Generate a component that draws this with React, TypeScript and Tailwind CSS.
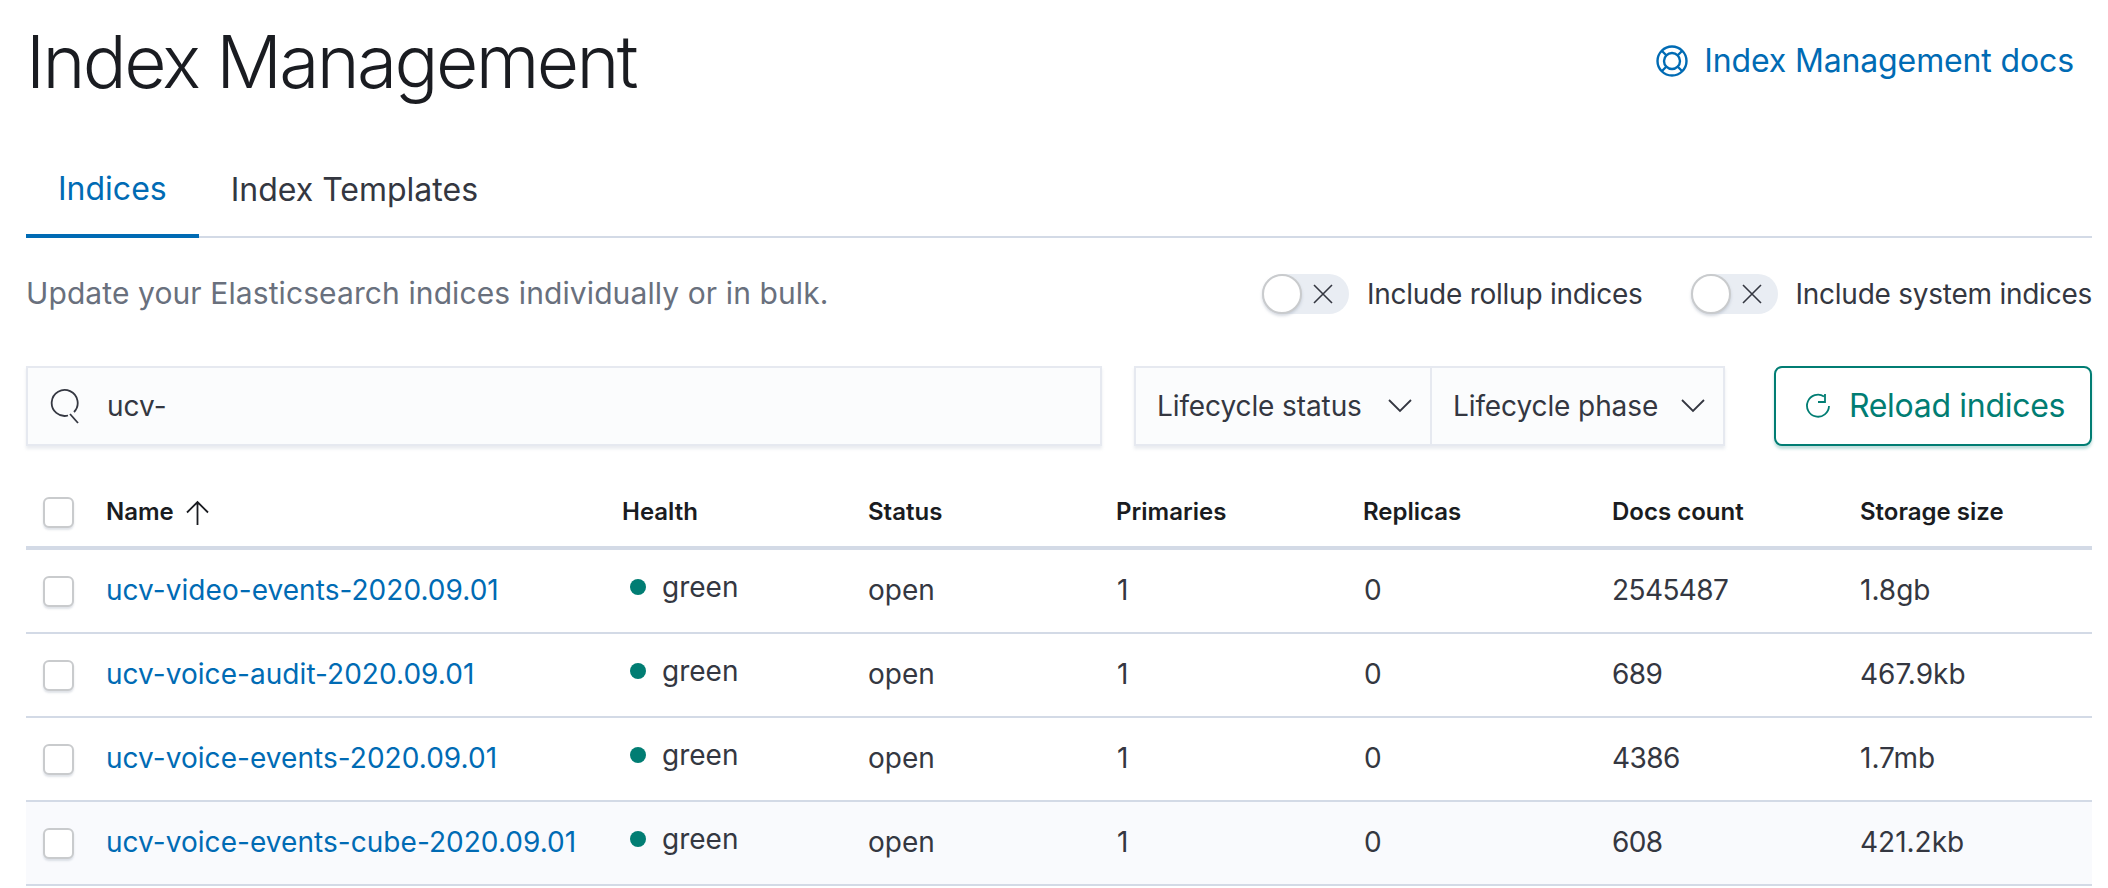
import React from 'react';

const rows = [
  { name: 'ucv-video-events-2020.09.01', docs: '2545487', size: '1.8gb' },
  { name: 'ucv-voice-audit-2020.09.01', docs: '689', size: '467.9kb' },
  { name: 'ucv-voice-events-2020.09.01', docs: '4386', size: '1.7mb' },
  { name: 'ucv-voice-events-cube-2020.09.01', docs: '608', size: '421.2kb', shaded: true },
];

const columns = 'grid grid-cols-[80px_516px_246px_248px_247px_249px_248px_232px] items-center';

const Checkbox = () => (
  <div className="ml-[17px] h-[31px] w-[31px] rounded-[6px] border-2 border-[#c9cbcd] bg-white shadow-[0_2px_2px_rgba(152,162,179,0.3)]" />
);

const Toggle = ({ label }: { label: string }) => (
  <div className="flex items-center gap-[18px]">
    <div className="relative flex h-[40px] w-[87px] items-center justify-end rounded-full bg-[#e9edf3] pr-[15px]">
      <div className="absolute left-0 top-0 h-[40px] w-[40px] rounded-full border-2 border-[#c9cbcd] bg-white shadow-[0_2px_3px_rgba(152,162,179,0.4)]" />
      <svg width="22" height="22" viewBox="0 0 22 22" fill="none" stroke="#343741" strokeWidth="1.6">
        <path d="M2 2l18 18M20 2L2 20" />
      </svg>
    </div>
    <span className="text-[28px] leading-none tracking-[-0.25px] text-[#343741]">{label}</span>
  </div>
);

const Chevron = () => (
  <svg width="24" height="14" viewBox="0 0 24 14" fill="none" stroke="#343741" strokeWidth="1.8">
    <path d="M1 1l11 11L23 1" />
  </svg>
);

const filterBox = 'flex items-center bg-[#fbfcfd] border-2 border-[#e6e9f0] shadow-[0_3px_3px_rgba(152,162,179,0.2)] h-[80px]';

export default function App() {
  return (
    <div className="h-[888px] w-[2108px] overflow-hidden bg-white pl-[26px] pr-[16px] font-['Inter',sans-serif] text-[#343741]">
      <div className="flex h-[122px] items-center justify-between">
        <h1 className="text-[73px] font-light leading-none tracking-[-0.036em] text-[#1a1c21]">Index Management</h1>
        <a className="mr-[18px] flex items-center gap-[16px] text-[32px] leading-none tracking-[-0.13px] text-[#006bb4]">
          <svg width="32" height="32" viewBox="0 0 32 32" fill="none" stroke="#006bb4" strokeWidth="2.4">
            <circle cx="16" cy="16" r="14.5" />
            <circle cx="16" cy="16" r="8" />
            <path d="M6 6l4.5 4.5M26 6l-4.5 4.5M6 26l4.5-4.5M26 26l-4.5-4.5" />
          </svg>
          Index Management docs
        </a>
      </div>

      <div className="flex h-[116px] items-end border-b-2 border-[#d3dae6]">
        <div className="-mb-[2px] flex h-[98px] items-center border-b-4 border-[#006bb4] px-[32px] pt-[4px] text-[32px] leading-none text-[#006bb4]">Indices</div>
        <div className="flex h-[96px] items-center px-[32px] pt-[4px] text-[32px] leading-none text-[#343741]">Index Templates</div>
      </div>

      <div className="mt-[36px] flex h-[40px] items-center">
        <p className="flex-1 pb-[2px] text-[30px] leading-none tracking-[0.1px] text-[#69707d]">Update your Elasticsearch indices individually or in bulk.</p>
        <div className="flex gap-[48px]">
          <Toggle label="Include rollup indices" />
          <Toggle label="Include system indices" />
        </div>
      </div>

      <div className="mt-[52px] flex items-center">
        <div className={`${filterBox} w-[1076px] pl-[20px]`}>
          <svg width="36" height="36" viewBox="0 0 36 36" fill="none" stroke="#343741" strokeWidth="1.8">
            <path d="M20 27.5A13 13 0 1 1 26 24" />
            <path d="M22 26l8 9" />
          </svg>
          <span className="ml-[23px] text-[28px] leading-none">ucv-</span>
        </div>
        <div className={`${filterBox} ml-[32px] w-[591px] text-[28px] leading-none tracking-[-0.1px]`}>
          <div className="flex h-full w-[296px] items-center justify-between border-r-2 border-[#e6e9f0] pl-[21px] pr-[18px]">
            Lifecycle status
            <Chevron />
          </div>
          <div className="flex h-full flex-1 items-center justify-between pl-[21px] pr-[18px]">
            Lifecycle phase
            <Chevron />
          </div>
        </div>
        <div className="ml-[49px] flex h-[80px] w-[318px] items-center justify-center gap-[16px] rounded-[8px] border-2 border-[#017d73] bg-white pl-[4px] text-[32px] leading-none tracking-[-0.3px] text-[#017d73] shadow-[0_3px_3px_rgba(1,125,115,0.25)]">
          <svg width="28" height="28" viewBox="0 0 28 28" fill="none" stroke="#017d73" strokeWidth="1.8">
            <path d="M19 4.5a11 11 0 1 0 5 9.5M20 2v8h-7" />
          </svg>
          Reload indices
        </div>
      </div>

      <div className={`${columns} mt-[32px] h-[72px] border-b-4 border-[#d3dae6] text-[24px] font-semibold leading-none text-[#1a1c21]`}>
        <Checkbox />
        <div className="flex items-center gap-[12px]">
          Name
          <svg width="23" height="25" viewBox="0 0 23 25" fill="none" stroke="#1a1c21" strokeWidth="1.8">
            <path d="M11.5 25V2M1 12.500L11.500 2 22 12.500" />
          </svg>
        </div>
        <div>Health</div>
        <div>Status</div>
        <div>Primaries</div>
        <div>Replicas</div>
        <div>Docs count</div>
        <div>Storage size</div>
      </div>

      {rows.map((row) => (
        <div
          key={row.name}
          className={`${columns} h-[84px] border-b-2 border-[#d3dae6] text-[28px] leading-none ${row.shaded ? 'bg-[#f9fafd]' : ''}`}
        >
          <Checkbox />
          <a className="-mt-[2px] tracking-[0.05px] text-[#006bb4]">{row.name}</a>
          <div className="-mt-[8px] flex items-center gap-[16px] pl-[8px]">
            <span className="h-[16px] w-[16px] rounded-full bg-[#017d73]" />
            green
          </div>
          <div className="-mt-[2px]">open</div>
          <div className="-mt-[2px] pl-[1px]">1</div>
          <div className="-mt-[2px] pl-[1px]">0</div>
          <div className="-mt-[2px] tracking-[-0.6px]">{row.docs}</div>
          <div className="-mt-[2px]">{row.size}</div>
        </div>
      ))}
    </div>
  );
}
